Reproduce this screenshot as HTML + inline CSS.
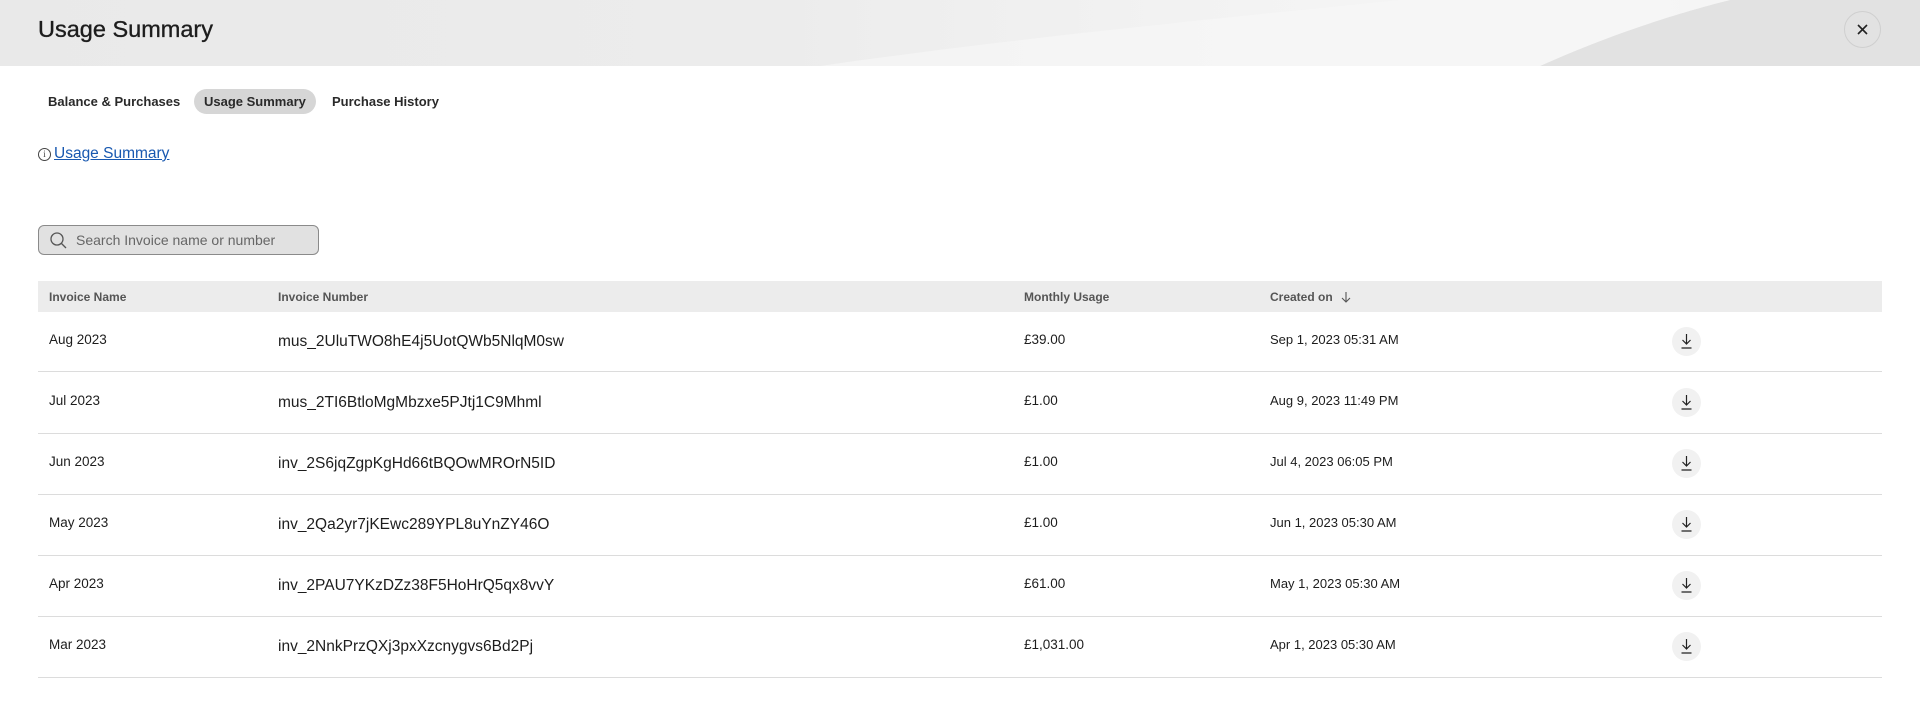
<!DOCTYPE html>
<html><head><meta charset="utf-8"><style>
*{margin:0;padding:0;box-sizing:border-box}
body{width:1920px;height:724px;background:#fff;font-family:"Liberation Sans",Arial,sans-serif;color:#1d1d1d;position:relative;overflow:hidden}
.hdr{position:absolute;left:0;top:0;width:1920px;height:66px;background:linear-gradient(90deg,#e9e9e9 0%,#ececec 40%,#f3f3f3 65%,#f6f6f6 80%,#ececec 100%)}
.hdr svg{position:absolute;left:0;top:0}
.title{position:absolute;left:38px;top:16px;font-size:23.5px;-webkit-text-stroke:0.35px #1d1d1d;color:#1d1d1d}
.close{position:absolute;left:1844px;top:11px;width:37px;height:37px;border:1px solid #cfcfcf;border-radius:50%}
.tab{position:absolute;top:89px;height:25px;line-height:25px;font-size:13px;font-weight:bold;color:#2a2a2a}
.pill{background:#d6d6d6;border-radius:13px;padding:0 10px}
.info{position:absolute;left:38px;top:148px;width:13px;height:13px;border:1px solid #444;border-radius:50%;font-size:9px;line-height:11px;text-align:center;color:#444;font-family:"Liberation Serif",serif}
.link{position:absolute;left:54px;top:145px;font-size:15.5px;color:#1858b0;text-decoration:underline}
.search{position:absolute;left:38px;top:225px;width:281px;height:30px;background:#e1e1e1;border:1px solid #8a8a8a;border-radius:6px}
.search span{position:absolute;left:37px;top:6px;font-size:14px;color:#666}
.th{position:absolute;left:38px;top:281px;width:1844px;height:31px;background:#ececec}
.th div{position:absolute;top:9px;font-size:12px;font-weight:bold;color:#555}
.row{position:absolute;left:38px;width:1844px;height:61px;border-bottom:1px solid #dcdcdc}
.row div{position:absolute}
.c1{left:11px;top:20px;font-size:13.5px}
.c2{left:240px;top:21px;font-size:15.5px}
.c3{left:986px;top:20px;font-size:13.5px}
.c4{left:1232px;top:20px;font-size:13px}
.dl{left:1634px;top:15px;width:29px;height:29px;border-radius:50%;background:#f1f1f1}
</style></head><body>
<div class="hdr"><svg width="1920" height="66"><path d="M1540 66 C1620 30 1690 10 1730 0 L1920 0 L1920 66 Z" fill="#e2e2e2"/><path d="M820 66 C1000 40 1200 20 1400 0 L1730 0 C1690 10 1620 30 1540 66 Z" fill="#f7f7f7" opacity="0.7"/></svg>
<div class="title">Usage Summary</div>
<div class="close"><svg width="35" height="35" viewBox="0 0 35 35"><path d="M13 13 L22 22 M22 13 L13 22" stroke="#222" stroke-width="1.6"/></svg></div>
</div>
<div class="tab" style="left:48px">Balance &amp; Purchases</div>
<div class="tab pill" style="left:194px">Usage Summary</div>
<div class="tab" style="left:332px">Purchase History</div>
<div class="info">i</div>
<a class="link">Usage Summary</a>
<div class="search"><svg width="20" height="20" viewBox="0 0 20 20" style="position:absolute;left:10px;top:5px"><circle cx="8" cy="8" r="6" fill="none" stroke="#555" stroke-width="1.3"/><path d="M12.5 12.5 L17 17" stroke="#555" stroke-width="1.3"/></svg><span>Search Invoice name or number</span></div>
<div class="th"><div style="left:11px">Invoice Name</div><div style="left:240px">Invoice Number</div><div style="left:986px">Monthly Usage</div><div style="left:1232px">Created on <svg width="12" height="12" viewBox="0 0 12 12" style="vertical-align:-2px;margin-left:4px"><path d="M6 1 V11 M2 7 L6 11 L10 7" fill="none" stroke="#555" stroke-width="1.1"/></svg></div></div>

<div class="row" style="top:312px;height:60px"><div class="c1">Aug 2023</div><div class="c2">mus_2UluTWO8hE4j5UotQWb5NlqM0sw</div><div class="c3">£39.00</div><div class="c4">Sep 1, 2023 05:31 AM</div><div class="dl"><svg width="29" height="29" viewBox="0 0 29 29"><path d="M14.5 7 V17 M10.5 13 L14.5 17 L18.5 13 M9.5 21 H19.5" fill="none" stroke="#222" stroke-width="1.2"/></svg></div></div>
<div class="row" style="top:373px"><div class="c1">Jul 2023</div><div class="c2">mus_2TI6BtloMgMbzxe5PJtj1C9Mhml</div><div class="c3">£1.00</div><div class="c4">Aug 9, 2023 11:49 PM</div><div class="dl"><svg width="29" height="29" viewBox="0 0 29 29"><path d="M14.5 7 V17 M10.5 13 L14.5 17 L18.5 13 M9.5 21 H19.5" fill="none" stroke="#222" stroke-width="1.2"/></svg></div></div>
<div class="row" style="top:434px"><div class="c1">Jun 2023</div><div class="c2">inv_2S6jqZgpKgHd66tBQOwMROrN5ID</div><div class="c3">£1.00</div><div class="c4">Jul 4, 2023 06:05 PM</div><div class="dl"><svg width="29" height="29" viewBox="0 0 29 29"><path d="M14.5 7 V17 M10.5 13 L14.5 17 L18.5 13 M9.5 21 H19.5" fill="none" stroke="#222" stroke-width="1.2"/></svg></div></div>
<div class="row" style="top:495px"><div class="c1">May 2023</div><div class="c2">inv_2Qa2yr7jKEwc289YPL8uYnZY46O</div><div class="c3">£1.00</div><div class="c4">Jun 1, 2023 05:30 AM</div><div class="dl"><svg width="29" height="29" viewBox="0 0 29 29"><path d="M14.5 7 V17 M10.5 13 L14.5 17 L18.5 13 M9.5 21 H19.5" fill="none" stroke="#222" stroke-width="1.2"/></svg></div></div>
<div class="row" style="top:556px"><div class="c1">Apr 2023</div><div class="c2">inv_2PAU7YKzDZz38F5HoHrQ5qx8vvY</div><div class="c3">£61.00</div><div class="c4">May 1, 2023 05:30 AM</div><div class="dl"><svg width="29" height="29" viewBox="0 0 29 29"><path d="M14.5 7 V17 M10.5 13 L14.5 17 L18.5 13 M9.5 21 H19.5" fill="none" stroke="#222" stroke-width="1.2"/></svg></div></div>
<div class="row" style="top:617px"><div class="c1">Mar 2023</div><div class="c2">inv_2NnkPrzQXj3pxXzcnygvs6Bd2Pj</div><div class="c3">£1,031.00</div><div class="c4">Apr 1, 2023 05:30 AM</div><div class="dl"><svg width="29" height="29" viewBox="0 0 29 29"><path d="M14.5 7 V17 M10.5 13 L14.5 17 L18.5 13 M9.5 21 H19.5" fill="none" stroke="#222" stroke-width="1.2"/></svg></div></div>
</body></html>
